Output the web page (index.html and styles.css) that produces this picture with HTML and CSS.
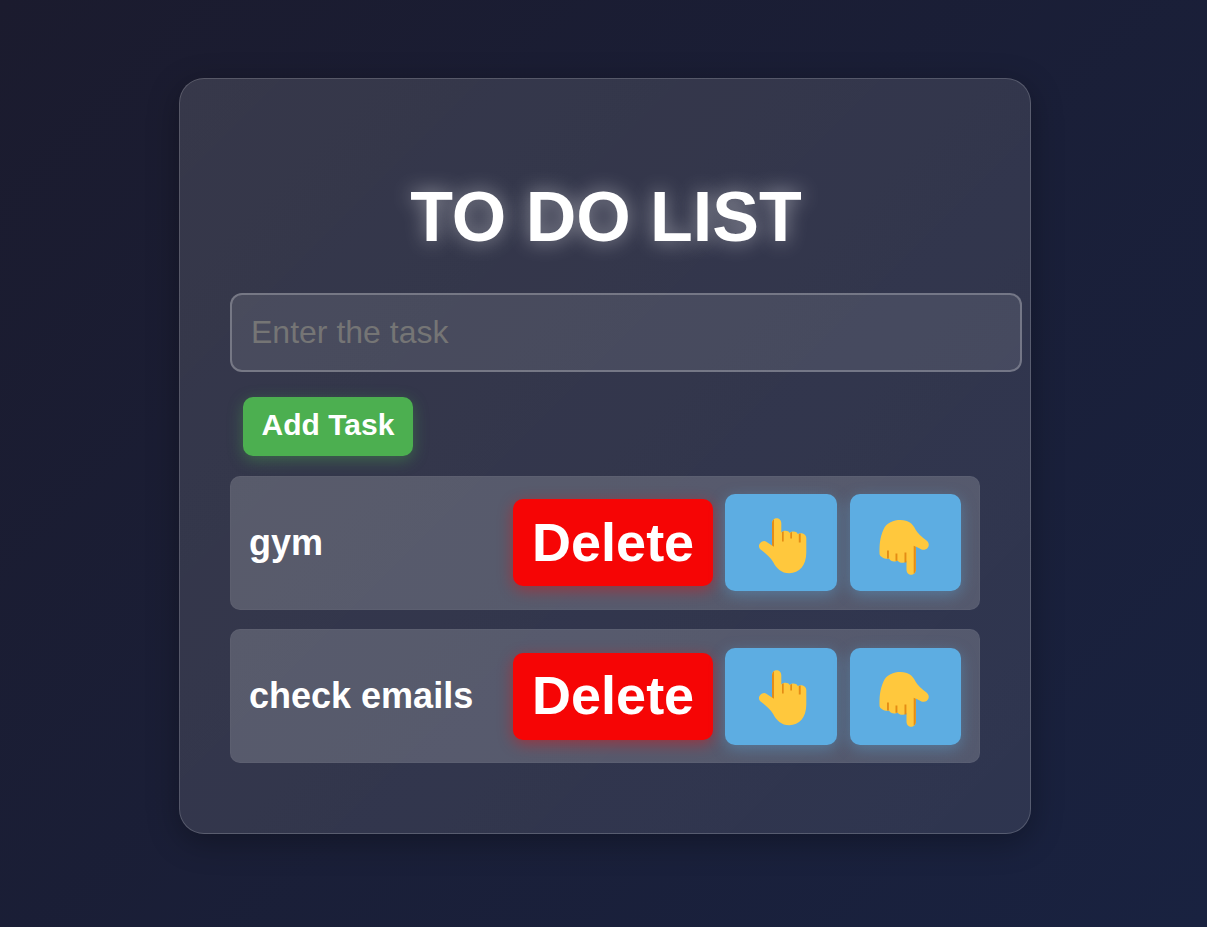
FILE: index.html
```html
<!DOCTYPE html>
<html lang="en">
<head>
<meta charset="utf-8">
<title>To Do List</title>
<link rel="stylesheet" href="styles.css">
</head>
<body>
<main class="card">
  <h1 class="title">TO DO LIST</h1>
  <input class="task-input" type="text" placeholder="Enter the task">
  <button class="add-btn" type="button">Add Task</button>
  <ol class="tasks">
    <li class="task">
      <span class="task-text">gym</span>
      <button class="delete-btn" type="button">Delete</button>
      <button class="move-btn" type="button" aria-label="Move up">
        <svg class="hand" viewBox="-2 -2.5 62 66"><use href="#hand-up"/></svg>
      </button>
      <button class="move-btn" type="button" aria-label="Move down">
        <svg class="hand" viewBox="0.5 -2.5 62 66"><use href="#hand-down"/></svg>
      </button>
    </li>
    <li class="task">
      <span class="task-text">check emails</span>
      <button class="delete-btn" type="button">Delete</button>
      <button class="move-btn" type="button" aria-label="Move up">
        <svg class="hand" viewBox="-2 -1.5 62 66"><use href="#hand-up"/></svg>
      </button>
      <button class="move-btn" type="button" aria-label="Move down">
        <svg class="hand" viewBox="0.5 -1.5 62 66"><use href="#hand-down"/></svg>
      </button>
    </li>
  </ol>
</main>
<svg class="defs" aria-hidden="true">
  <defs>
    <g id="hand-up">
      <path fill="#ffc83d" d="M20 11c0-7 9.3-7 9.3 0V20c2-2.500 7-2.500 8.500.5 2-2 6.500-2 8 1 3-2 8.500-.5 8.500 4V40c0 13-7 20.700-17 20.700-8 0-13-5-16-11-3-5-7-8-13-13-4-4 2-10 6-7.500L20 33z"/>
      <path fill="#e48c15" d="M20 11c0-2 .8-3.500 2-4.300V34.300L20 33zM30 19.500l1.700-.8V29H30zM38.300 20.300l1.700-.8V26h-1.700zM46.800 21.500l1.900-.5v9h-1.900z"/>
    </g>
    <g id="hand-down">
      <path fill="#ffc83d" d="M42.300 57c0 7-9.300 7-9.300 0V48.500c-2 2.500-7 2.500-9-.5-2 1.500-7 1.500-8.500-2-3 1-9.500-1-9.500-5C6 33 6 26 10 17 13 10 20 7.500 27 7.500c8 0 12 3.500 15 9.500 2 4 6 7 11 11 5 4 1 11-5 9l-5.700-3z"/>
      <path fill="#e48c15" d="M42.300 57c0 2-.8 3.500-2.100 4.300V33.200l2.100 1zM13.500 38h1.900v8h-1.900zM22 41h1.900v7.300H22zM31 40h1.900v10H31z"/>
    </g>
  </defs>
</svg>
</body>
</html>
```

FILE: styles.css
```css
* {
  box-sizing: border-box;
}

html,
body {
  height: 100%;
}

body {
  margin: 0;
  background: linear-gradient(135deg, #1b1b2e, #192240);
  font-family: "Liberation Sans", Arial, sans-serif;
  display: flex;
  justify-content: center;
  padding: 78px 0 0 3px;
}

.card {
  width: 852px;
  height: 756px;
  padding: 50px;
  border: 1px solid rgba(255, 255, 255, 0.18);
  border-radius: 25px;
  background: linear-gradient(135deg, rgba(255, 255, 255, 0.125), rgba(255, 255, 255, 0.095));
  box-shadow: 0 8px 32px rgba(0, 0, 0, 0.3);
}

.title {
  margin: 48px 0 36px;
  padding-left: 2px;
  height: 80px;
  color: #fff;
  font-size: 70px;
  line-height: 80px;
  font-weight: 700;
  text-align: center;
  text-shadow: 0 0 20px rgba(255, 255, 255, 0.5);
}

.task-input {
  display: block;
  width: 792px;
  height: 79px;
  padding: 0 19px;
  border: 2px solid rgba(255, 255, 255, 0.25);
  border-radius: 12px;
  background: rgba(255, 255, 255, 0.1);
  font-family: inherit;
  font-size: 32px;
  outline: none;
}

.task-input::placeholder {
  color: #757575;
  opacity: 1;
}

.add-btn {
  display: block;
  margin: 25px 0 19.6px 13px;
  width: 170px;
  height: 59px;
  padding: 0 0 3px;
  border: 0;
  border-radius: 10px;
  background: #4caf50;
  color: #fff;
  font-family: inherit;
  font-size: 30px;
  font-weight: 700;
  box-shadow: 0 4px 15px rgba(76, 175, 80, 0.4);
}

.tasks {
  list-style: none;
  margin: 0;
  padding: 0;
  width: 750px;
  display: flex;
  flex-direction: column;
  gap: 18.6px;
}

.task {
  height: 134.6px;
  padding: 0 17.9px 0 18px;
  display: flex;
  align-items: center;
  gap: 12.5px;
  border-radius: 10px;
  background: rgba(255, 255, 255, 0.18);
  border: 1px solid rgba(255, 255, 255, 0.03);
}

.task-text {
  flex: 1;
  color: #fff;
  font-size: 36px;
  font-weight: 700;
}

.delete-btn {
  width: 200px;
  height: 87px;
  padding: 0 0 2px 1px;
  border: 0;
  border-radius: 10px;
  background: #f60505;
  color: #fff;
  font-family: inherit;
  font-size: 54px;
  font-weight: 700;
  box-shadow: 0 4px 15px rgba(255, 0, 0, 0.4);
}

.move-btn {
  width: 111.5px;
  height: 97px;
  padding: 0;
  border: 0;
  border-radius: 10px;
  background: #5dade2;
  display: flex;
  align-items: center;
  justify-content: center;
  box-shadow: 0 4px 15px rgba(93, 173, 226, 0.4);
}

.move-btn + .move-btn {
  margin-left: 0.5px;
}

.hand {
  width: 62px;
  height: 66px;
}

.defs {
  position: absolute;
  width: 0;
  height: 0;
}
```
